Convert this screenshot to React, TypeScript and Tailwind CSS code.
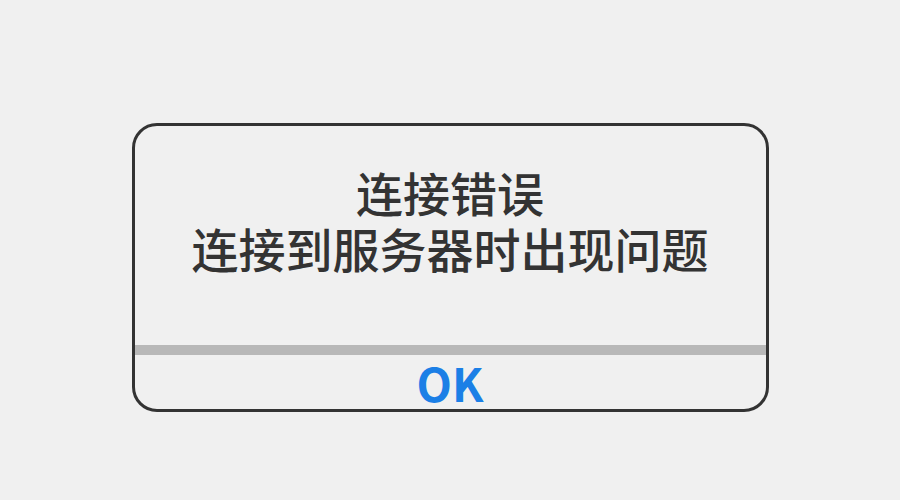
import React from "react";

export default function App() {
  return (
    <div
      className="w-[900px] h-[500px] bg-[#f0f0f0] flex justify-center pt-[123px]"
      style={{ fontFamily: '"Noto Sans CJK SC", "Noto Sans", sans-serif' }}
    >
      <div className="w-[637px] h-[289px] border-[3px] border-[#333333] rounded-[25px] flex flex-col overflow-hidden">
        <div className="flex-1 flex flex-col items-center pt-[38px] text-[#333333] font-medium">
          <div className="text-[47px] leading-[56px] whitespace-nowrap">连接错误</div>
          <div className="text-[47px] leading-[56px] whitespace-nowrap">连接到服务器时出现问题</div>
        </div>
        <div className="h-[10px] bg-[#b8b8b8]" />
        <div className="h-[54px] flex items-center justify-center text-[#1b7fe6] font-bold text-[46px] leading-[54px]">
          OK
        </div>
      </div>
    </div>
  );
}
